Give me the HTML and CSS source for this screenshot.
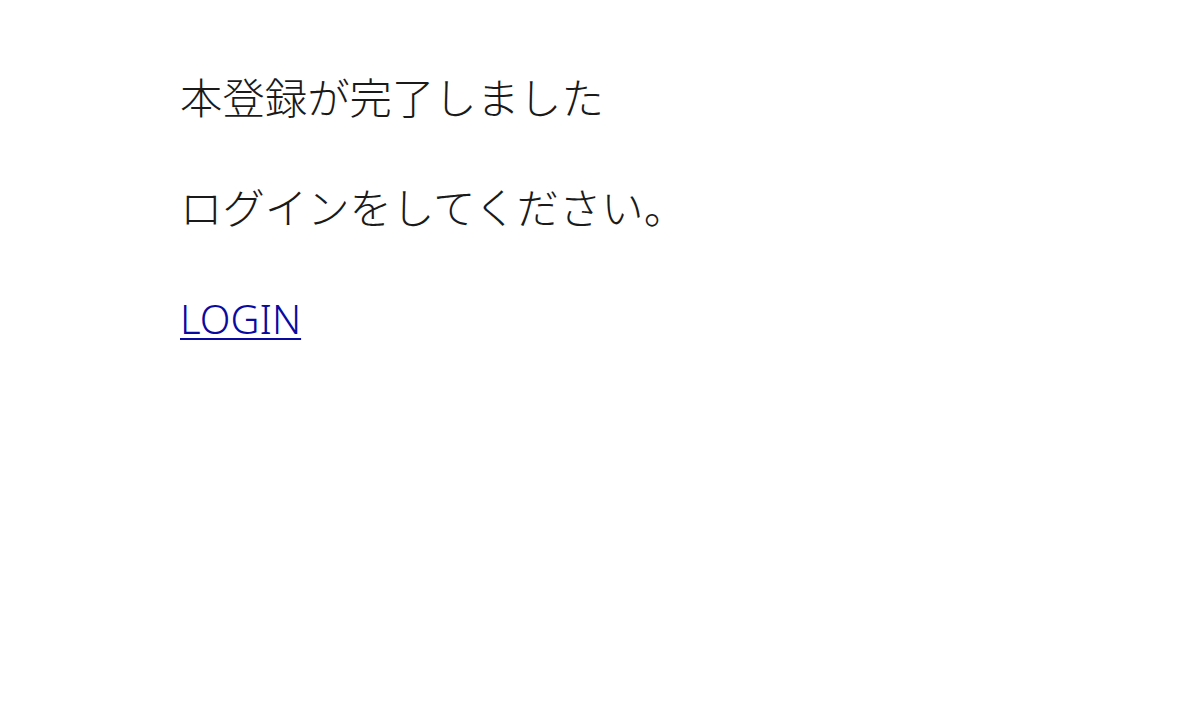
FILE: index.html
```html
<!DOCTYPE html>
<html lang="ja">
<head>
<meta charset="utf-8">
<link rel="stylesheet" href="styles.css">
</head>
<body>
<main class="page">
  <p class="msg">本登録が完了しました</p>
  <p class="msg">ログインをしてください。</p>
  <p class="msg"><a class="link" href="#">LOGIN</a></p>
</main>
</body>
</html>
```
FILE: styles.css
```css
html, body {
  margin: 0;
  padding: 0;
  background: #ffffff;
}
.page {
  padding: 67px 0 0 180px;
  font-family: "Noto Sans", "Noto Sans CJK JP", sans-serif;
  font-size: 42.4px;
  color: #1a1a1a;
}
.msg {
  margin: 0 0 48px 0;
  line-height: 62px;
  font-weight: 300;
}
.link {
  font-size: 40px;
  color: #0a0aa0;
  text-decoration: underline;
  text-underline-offset: 4px;
  text-decoration-thickness: 2px;
}
```
